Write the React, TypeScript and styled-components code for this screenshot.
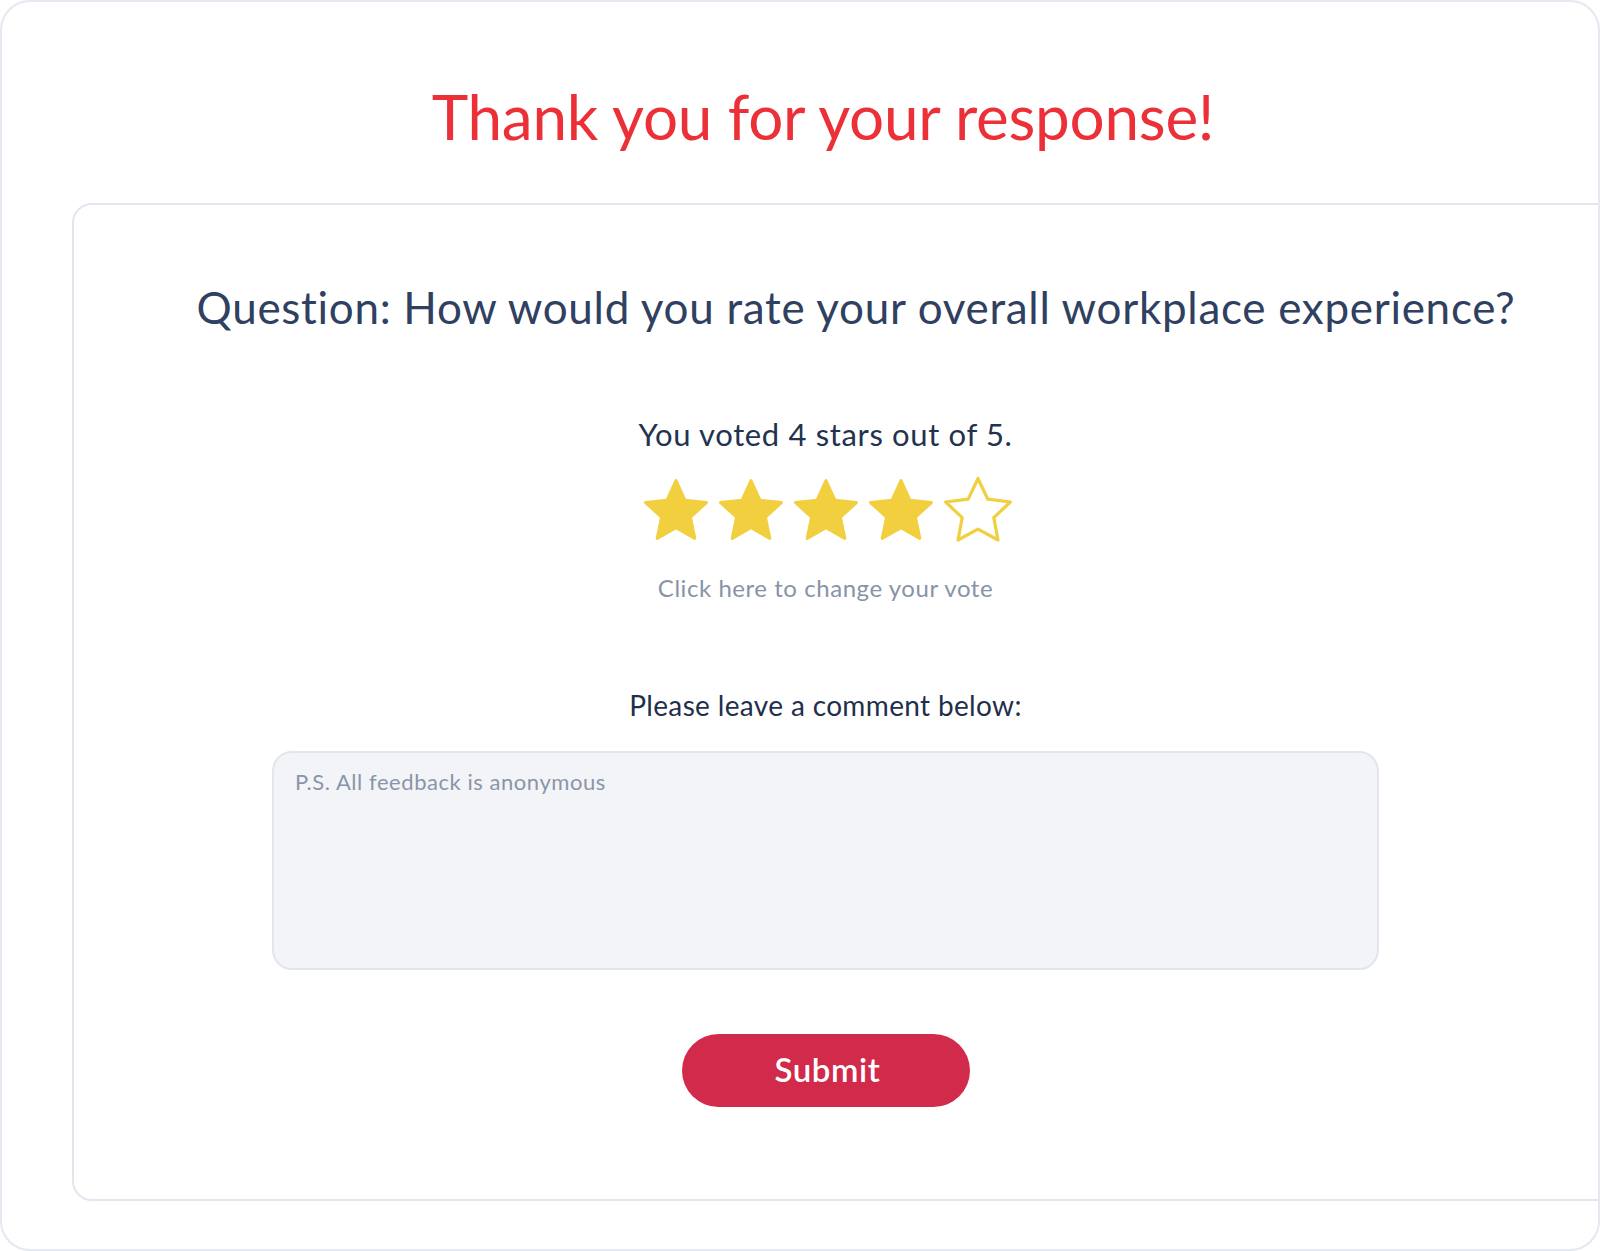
import React from "react";
import styled, { createGlobalStyle } from "styled-components";

const GlobalStyle = createGlobalStyle`
  html, body {
    margin: 0;
    padding: 0;
    background: #ffffff;
  }
  body {
    font-family: Lato, "Open Sans", "Liberation Sans", sans-serif;
    overflow: hidden;
  }
  * { box-sizing: border-box; }
`;

const Frame = styled.div`
  width: 1600px;
  height: 1251px;
  border: 2px solid #e5e8f0;
  border-radius: 30px;
  background: #ffffff;
  overflow: hidden;
  padding-top: 77px;
  display: flex;
  flex-direction: column;
`;

const Title = styled.h1`
  margin: 0;
  padding-left: 46px;
  text-align: center;
  font-family: Lato, sans-serif;
  font-weight: 400;
  font-size: 62px;
  letter-spacing: -0.25px;
  line-height: 1.2;
  color: #ec3038;
`;

const Card = styled.section`
  margin: 50px 0 0 70px;
  width: 1562px;
  flex-shrink: 0;
  border: 2px solid #e3e6ee;
  border-radius: 20px;
  background: #ffffff;
  padding: 76px 0 92px 0;
  display: flex;
  flex-direction: column;
`;

const Question = styled.h2`
  margin: 0;
  padding-left: 6px;
  text-align: center;
  font-family: Lato, sans-serif;
  font-weight: 400;
  font-size: 44px;
  letter-spacing: 0.7px;
  line-height: 1.2;
  color: #2f4060;
`;

const Column = styled.div`
  margin-left: 198px;
  width: 1107px;
  display: flex;
  flex-direction: column;
  align-items: center;
`;

const Text = styled.p<{ $size: number; $color: string; $top: number; $spacing: number }>`
  margin: ${(p) => p.$top}px 0 0 0;
  font-family: Lato, sans-serif;
  font-weight: 400;
  font-size: ${(p) => p.$size}px;
  letter-spacing: ${(p) => p.$spacing}px;
  line-height: 1.2;
  color: ${(p) => p.$color};
`;

const StarsRow = styled.div`
  margin-top: 26px;
  display: flex;
  gap: 9px;
`;

const StarButton = styled.span`
  display: block;
  width: 66px;
  height: 62px;
  overflow: visible;
  cursor: pointer;
  svg {
    display: block;
    overflow: visible;
  }
`;

const ChangeLink = styled.a`
  margin-top: 33px;
  font-family: Lato, sans-serif;
  font-size: 24px;
  letter-spacing: 0.55px;
  line-height: 1.2;
  color: #8893a8;
  text-decoration: none;
  cursor: pointer;
`;

const Comment = styled.textarea`
  margin-top: 28px;
  width: 1107px;
  height: 219px;
  resize: none;
  border: 2px solid #e1e5ec;
  border-radius: 20px;
  background: #f2f4f7;
  padding: 16px 21px;
  font-family: Lato, sans-serif;
  font-size: 22px;
  letter-spacing: 0.55px;
  line-height: 1.2;
  color: #2c3d5b;
  outline: none;
  &::placeholder {
    color: #8a95a9;
  }
`;

const SubmitButton = styled.button`
  margin-top: 64px;
  width: 288px;
  height: 73px;
  border: none;
  border-radius: 37px;
  background: #d12a4b;
  color: #ffffff;
  font-family: Lato, sans-serif;
  font-weight: 600;
  font-size: 33px;
  letter-spacing: 0.6px;
  cursor: pointer;
  padding: 0 0 2px 4px;
`;

function starPoints(cx: number, cy: number, r: number, ri: number): string {
  const pts: string[] = [];
  for (let i = 0; i < 10; i++) {
    const a = ((-90 + i * 36) * Math.PI) / 180;
    const rr = i % 2 === 0 ? r : ri;
    pts.push(`${(cx + rr * Math.cos(a)).toFixed(2)},${(cy + rr * Math.sin(a)).toFixed(2)}`);
  }
  return pts.join(" ");
}

const FILLED = starPoints(33, 33.5, 32, 15.2);
const OUTLINE = starPoints(35, 34.5, 34, 16.6);

const Star: React.FC<{ filled: boolean }> = ({ filled }) => (
  <StarButton>
    {filled ? (
      <svg width="66" height="62" viewBox="0 0 66 62">
        <polygon points={FILLED} fill="#f1cf3f" stroke="#f1cf3f" strokeWidth={3} strokeLinejoin="round" />
      </svg>
    ) : (
      <svg width="70" height="64" viewBox="0 0 70 64" style={{ marginTop: -1 }}>
        <polygon points={OUTLINE} fill="#ffffff" stroke="#f1cf3f" strokeWidth={3.2} strokeLinejoin="round" />
      </svg>
    )}
  </StarButton>
);

export default function App() {
  const rating = 4;
  return (
    <>
      <GlobalStyle />
      <Frame>
        <Title>Thank you for your response!</Title>
        <Card>
          <Question>Question: How would you rate your overall workplace experience?</Question>
          <Column>
            <Text $size={31} $spacing={0.65} $color="#23334f" $top={82}>
              You voted 4 stars out of 5.
            </Text>
            <StarsRow>
              {[1, 2, 3, 4, 5].map((n) => (
                <Star key={n} filled={n <= rating} />
              ))}
            </StarsRow>
            <ChangeLink>Click here to change your vote</ChangeLink>
            <Text $size={28} $spacing={0.35} $color="#1f2f4c" $top={86}>
              Please leave a comment below:
            </Text>
            <Comment placeholder="P.S. All feedback is anonymous" />
            <SubmitButton>Submit</SubmitButton>
          </Column>
        </Card>
      </Frame>
    </>
  );
}
